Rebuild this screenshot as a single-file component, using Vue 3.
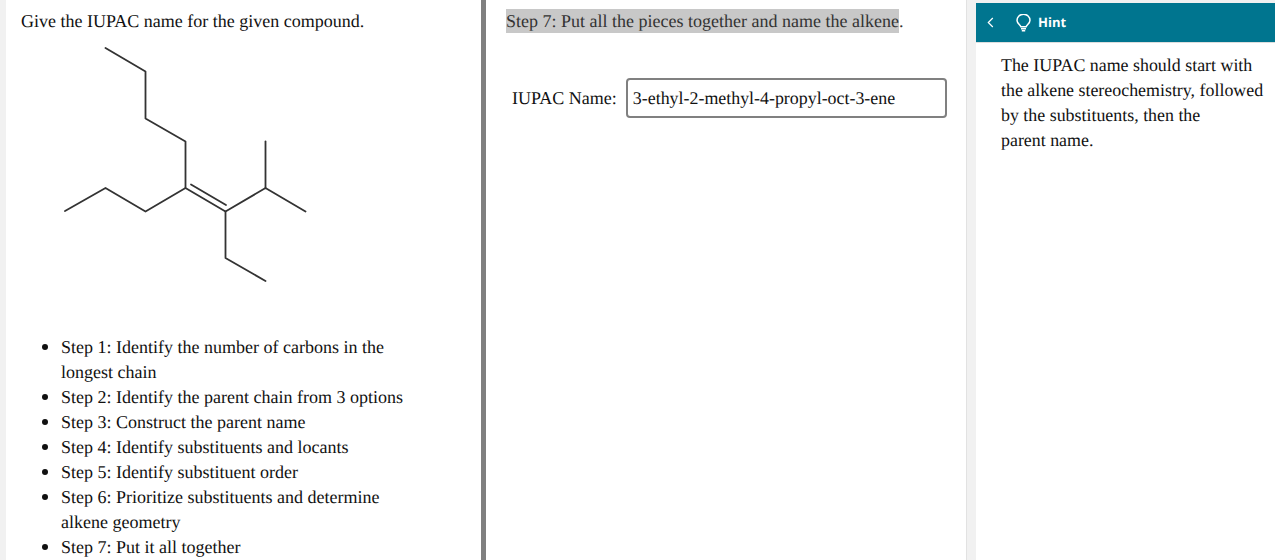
<script setup>
const steps = [
  'Step 1: Identify the number of carbons in the longest chain',
  'Step 2: Identify the parent chain from 3 options',
  'Step 3: Construct the parent name',
  'Step 4: Identify substituents and locants',
  'Step 5: Identify substituent order',
  'Step 6: Prioritize substituents and determine alkene geometry',
  'Step 7: Put it all together'
]
</script>

<template>
  <div class="page">
    <section class="left">
      <p class="prompt">Give the IUPAC name for the given compound.</p>
      <svg class="molecule" width="270" height="250" viewBox="0 0 270 250">
        <g fill="none" stroke="#333" stroke-width="1.8" stroke-linecap="round" stroke-linejoin="round">
          <polyline points="55.5,8 95.5,31.5 95.5,78.5 135.5,101.5 135.5,148 175.5,171.5 215.5,148 255.5,171.5" />
          <polyline points="15,171 55.5,148 95.5,171.5 135.5,148" />
          <polyline points="175.5,171.5 175.5,218 215.5,241" />
          <line x1="215.5" y1="148" x2="215.5" y2="101.5" />
          <line x1="141" y1="144.5" x2="176" y2="165" />
        </g>
      </svg>
      <ul class="steps">
        <li v-for="s in steps" :key="s">{{ s }}</li>
      </ul>
    </section>
    <section class="middle">
      <p class="step-title"><span class="mark">Step 7: Put all the pieces together and name the alkene</span>.</p>
      <div class="answer">
        <label class="answer-label">IUPAC Name:</label>
        <div class="answer-box">3-ethyl-2-methyl-4-propyl-oct-3-ene</div>
      </div>
    </section>
    <aside class="hint">
      <header class="hint-head">
        <svg class="chev" width="7" height="11" viewBox="0 0 7 11"><path d="M5.800 1 1.300 5.500l4.500 4.500" fill="none" stroke="#fff" stroke-width="1.200" /></svg>
        <svg class="bulb" width="15" height="18" viewBox="0 0 15 18">
          <path d="M4.900 12.800C4.400 10.700 1 9.600 1 6.300a6.500 6 0 0 1 13 0c0 3.300-3.400 4.400-3.900 6.500z" fill="none" stroke="#fff" stroke-width="1.500" />
          <path d="M5 14.800h5M5.800 16.800h3.400" fill="none" stroke="#fff" stroke-width="1.500" />
        </svg>
        <span class="hint-title">Hint</span>
      </header>
      <p class="hint-text">The IUPAC name should start with the alkene stereochemistry, followed by the substituents, then the<br />parent name.</p>
    </aside>
  </div>
</template>

<style>
html, body { margin: 0; overflow: hidden; }
</style>

<style scoped>
.page {
  display: flex;
  height: 560px;
  background: #f1f1f1;
  font-family: "Liberation Serif", serif;
  font-size: 18px;
  line-height: 25px;
  color: #111;
  overflow: hidden;
  text-rendering: geometricPrecision;
}
.left {
  width: 475px;
  margin-left: 6px;
  background: #fff;
  border-right: 5px solid #808080;
  flex: none;
}
.prompt { margin: 9px 0 0 15px; }
.molecule { display: block; margin: 6px 0 0 44px; }
.steps { margin: 45px 70px 0 0; padding: 0 0 0 55px; list-style: none; }
.steps li { position: relative; }
.steps li::before {
  content: "";
  position: absolute;
  left: -19px;
  top: 9px;
  width: 6px;
  height: 6px;
  border-radius: 50%;
  background: #111;
}
.middle {
  width: 480px;
  flex: none;
  background: #fff;
  border-right: 1px solid #e2e2e2;
}
.step-title { margin: 9px 0 0 20px; color: #333; }
.mark { background: #c8c8c8; padding: 2px 0; }
.answer { display: flex; align-items: center; margin: 44px 0 0 26px; }
.answer-label { margin-right: 9px; flex: none; }
.answer-box {
  flex: none;
  width: 321px;
  height: 40px;
  box-sizing: border-box;
  border: 2px solid #808080;
  border-radius: 4px;
  padding: 0 5px;
  font-size: 17.9px;
  line-height: 37px;
}
.hint {
  margin-left: 9px;
  flex: 1;
  background: #fff;
  margin-top: 3px;
}
.hint-head {
  height: 39px;
  background: #00758f;
  border-bottom: 1px solid #ddd;
  display: flex;
  align-items: center;
  color: #fff;
}
.chev { margin-left: 11px; }
.bulb { margin-left: 22px; }
.hint-title {
  margin-left: 7px;
  font-family: "Open Sans", sans-serif;
  font-size: 13px;
  font-weight: 700;
}
.hint-text { margin: 10px 10px 0 25px; font-size: 17.9px; }
</style>
